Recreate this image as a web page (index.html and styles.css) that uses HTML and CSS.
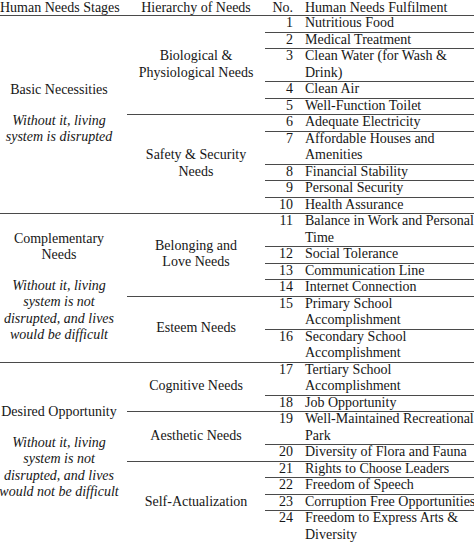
FILE: index.html
```html
<!DOCTYPE html>
<html>
<head>
<meta charset="utf-8">
<link rel="stylesheet" href="styles.css">
</head>
<body>
<div class="table">
  <div class="cell head stage-col">Human Needs Stages</div>
  <div class="cell head hier-col">Hierarchy of Needs</div>
  <div class="cell head no">No.</div>
  <div class="cell head txt">Human Needs Fulfilment</div>

  <div class="cell stage span10 line"><p>Basic Necessities</p><p class="note">Without it, living<br>system is disrupted</p></div>
  <div class="cell hier span5 line">Biological &amp;<br>Physiological Needs</div>
  <div class="cell no line">1</div><div class="cell txt line">Nutritious Food</div>
  <div class="cell no line">2</div><div class="cell txt line">Medical Treatment</div>
  <div class="cell no line">3</div><div class="cell txt line">Clean Water (for Wash &amp;<br>Drink)</div>
  <div class="cell no line">4</div><div class="cell txt line">Clean Air</div>
  <div class="cell no line">5</div><div class="cell txt line">Well-Function Toilet</div>
  <div class="cell hier span5 line">Safety &amp; Security<br>Needs</div>
  <div class="cell no line">6</div><div class="cell txt line">Adequate Electricity</div>
  <div class="cell no line">7</div><div class="cell txt line">Affordable Houses and<br>Amenities</div>
  <div class="cell no line">8</div><div class="cell txt line">Financial Stability</div>
  <div class="cell no line">9</div><div class="cell txt line">Personal Security</div>
  <div class="cell no line">10</div><div class="cell txt line">Health Assurance</div>

  <div class="cell stage span6 line"><p>Complementary<br>Needs</p><p class="note">Without it, living<br>system is not<br>disrupted, and lives<br>would be difficult</p></div>
  <div class="cell hier span4 line">Belonging and<br>Love Needs</div>
  <div class="cell no line">11</div><div class="cell txt line">Balance in Work and Personal<br>Time</div>
  <div class="cell no line">12</div><div class="cell txt line">Social Tolerance</div>
  <div class="cell no line">13</div><div class="cell txt line">Communication Line</div>
  <div class="cell no line">14</div><div class="cell txt line">Internet Connection</div>
  <div class="cell hier span2 line">Esteem Needs</div>
  <div class="cell no line">15</div><div class="cell txt line">Primary School<br>Accomplishment</div>
  <div class="cell no line">16</div><div class="cell txt line">Secondary School<br>Accomplishment</div>

  <div class="cell stage span8"><p>Desired Opportunity</p><p class="note">Without it, living<br>system is not<br>disrupted, and lives<br>would not be difficult</p></div>
  <div class="cell hier span2 line">Cognitive Needs</div>
  <div class="cell no line">17</div><div class="cell txt line">Tertiary School<br>Accomplishment</div>
  <div class="cell no line">18</div><div class="cell txt line">Job Opportunity</div>
  <div class="cell hier span2 line">Aesthetic Needs</div>
  <div class="cell no line">19</div><div class="cell txt line">Well-Maintained Recreational<br>Park</div>
  <div class="cell no line">20</div><div class="cell txt line">Diversity of Flora and Fauna</div>
  <div class="cell hier span4">Self-Actualization</div>
  <div class="cell no line">21</div><div class="cell txt line">Rights to Choose Leaders</div>
  <div class="cell no line">22</div><div class="cell txt line">Freedom of Speech</div>
  <div class="cell no line">23</div><div class="cell txt line">Corruption Free Opportunities</div>
  <div class="cell no">24</div><div class="cell txt">Freedom to Express Arts &amp;<br>Diversity</div>
</div>
</body>
</html>
```

FILE: styles.css
```css
html, body {
  margin: 0;
  padding: 0;
  background: #ffffff;
}
body {
  width: 474px;
  height: 544px;
  overflow: hidden;
  font-family: "Liberation Serif", "Times New Roman", serif;
  font-size: 14px;
  color: #161616;
}
.table {
  display: grid;
  grid-template-columns: 127px 138px 33px 176px;
  width: 474px;
}
.cell {
  line-height: 16.5px;
  white-space: nowrap;
}
.head {
  line-height: 15px;
  box-shadow: 0 1px 0 #4a4a4a;
}
.line {
  box-shadow: 0 1px 0 #4a4a4a;
}
.stage-col {
  text-align: center;
  padding-right: 9px;
}
.hier-col {
  text-align: center;
}
.no {
  text-align: right;
  padding-right: 5px;
}
.txt {
  padding-left: 7px;
  overflow: hidden;
}
.stage {
  display: flex;
  flex-direction: column;
  justify-content: center;
  align-items: center;
  text-align: center;
  padding-right: 9px;
}
.stage p {
  margin: 0;
}
.stage .note {
  font-style: italic;
  margin-top: 14px;
}
.hier {
  display: flex;
  flex-direction: column;
  justify-content: center;
  align-items: center;
  text-align: center;
}
.span2 { grid-row: span 2; }
.span4 { grid-row: span 4; }
.span5 { grid-row: span 5; }
.span6 { grid-row: span 6; }
.span8 { grid-row: span 8; }
.span10 { grid-row: span 10; }
```
